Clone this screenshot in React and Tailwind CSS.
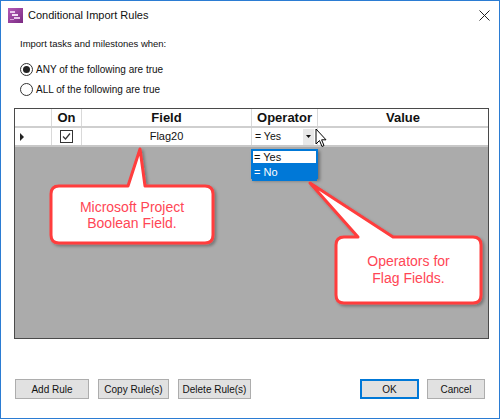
import React from "react";

const Radio = ({ checked, label }) => (
  <div className="flex items-center h-[20px] pl-[19px]">
    <span className="w-[13px] h-[13px] rounded-full border border-[#333] bg-white flex items-center justify-center">
      {checked && <span className="w-[7px] h-[7px] rounded-full bg-[#222]" />}
    </span>
    <span className="ml-[3px] text-[10px] text-[#111]">{label}</span>
  </div>
);

const Btn = ({ children, w, primary }) => (
  <button
    className={
      "h-[20px] text-[10px] text-[#111] bg-[#e1e1e1] flex items-center justify-center " +
      (primary ? "border-2 border-[#0078d7]" : "border border-[#adadad]")
    }
    style={{ width: w }}
  >
    {children}
  </button>
);

const AppIcon = () => (
  <svg width="15" height="15" viewBox="0 0 15 15">
    <defs>
      <linearGradient id="ig" x1="0" y1="0" x2="1" y2="1">
        <stop offset="0" stopColor="#b45ab8" />
        <stop offset="1" stopColor="#7a2a82" />
      </linearGradient>
    </defs>
    <rect x="0" y="0" width="15" height="15" fill="url(#ig)" />
    <rect x="2" y="3" width="5" height="2" fill="#e9c6ec" />
    <rect x="4" y="6" width="6" height="2" fill="#f4e0f5" />
    <rect x="6" y="9" width="6" height="2" fill="#e9c6ec" />
    <rect x="2" y="11" width="4" height="1" fill="#d7a3da" />
  </svg>
);

const Callouts = () => (
  <svg
    className="absolute left-0 top-0 pointer-events-none"
    width="500"
    height="419"
    viewBox="0 0 500 419"
  >
    <defs>
      <filter id="sh" x="-10%" y="-10%" width="130%" height="130%">
        <feDropShadow dx="2" dy="2" stdDeviation="1.5" floodColor="#000" floodOpacity="0.3" />
      </filter>
    </defs>
    <path
      d="M58 185 H127 L139 148 L144 185 H204 Q212 185 212 193 V234 Q212 242 204 242 H58 Q50 242 50 234 V193 Q50 185 58 185 Z"
      fill="#fff"
      stroke="#ff3c3c"
      strokeWidth="3"
      strokeLinejoin="round"
      filter="url(#sh)"
    />
    <path
      d="M343 236 H357 L309 182 L392 236 H472 Q480 236 480 244 V294 Q480 302 472 302 H343 Q335 302 335 294 V244 Q335 236 343 236 Z"
      fill="#fff"
      stroke="#ff3c3c"
      strokeWidth="3"
      strokeLinejoin="round"
      filter="url(#sh)"
    />
  </svg>
);

const Cursor = () => (
  <svg width="12" height="20" viewBox="0 0 12 20">
    <path d="M1 1 V16 L4.5 12.5 L7 18.5 L9 17.5 L6.6 11.8 H11 Z" fill="#fff" stroke="#000" strokeWidth="1" strokeLinejoin="round" />
  </svg>
);

export default function App() {
  return (
    <div
      className="relative w-[500px] h-[419px] bg-white border border-[#2b7cd3] overflow-hidden"
      style={{ fontFamily: '"Liberation Sans", Arial, sans-serif' }}
    >
      {/* title bar */}
      <div className="h-[29px] flex items-center pl-[7px] pr-[9px]">
        <AppIcon />
        <span className="ml-[5px] text-[11px] text-[#111]">Conditional Import Rules</span>
        <span className="ml-auto">
          <svg width="11" height="11" viewBox="0 0 11 11">
            <path d="M0.5 0.5 L10.5 10.5 M10.5 0.5 L0.5 10.5" stroke="#222" strokeWidth="1" />
          </svg>
        </span>
      </div>

      <div className="pl-[19px] mt-[7px] h-[14px] text-[9.5px] text-[#111] leading-[14px]">
        Import tasks and milestones when:
      </div>
      <div className="mt-[8px]">
        <Radio checked label="ANY of the following are true" />
        <Radio label="ALL of the following are true" />
      </div>

      {/* grid */}
      <div className="relative ml-[13px] mt-[9px] w-[475px] h-[231px] border border-[#4a4a4a] bg-[#ababab] flex flex-col">
        <div className="h-[19px] flex bg-white border-b-2 border-[#cfcfcf] text-[13px] font-bold text-[#111]">
          <div className="w-[37px] border-r border-[#d9d9d9]" />
          <div className="w-[30px] border-r border-[#d9d9d9] flex items-center justify-center">On</div>
          <div className="w-[170px] border-r border-[#d9d9d9] flex items-center justify-center">Field</div>
          <div className="w-[66px] border-r border-[#d9d9d9] flex items-center justify-center">Operator</div>
          <div className="flex-1 flex items-center justify-center">Value</div>
        </div>
        <div className="h-[19px] flex bg-white border-b-2 border-[#c8c8c8] text-[11px] text-[#111]">
          <div className="w-[37px] border-r border-[#d9d9d9] flex items-center pl-[5px]">
            <svg width="5" height="8" viewBox="0 0 5 8">
              <path d="M0 0 L4 4 L0 8 Z" fill="#222" />
            </svg>
          </div>
          <div className="w-[30px] border-r border-[#d9d9d9] flex items-center justify-center">
            <svg width="13" height="13" viewBox="0 0 13 13">
              <rect x="0.5" y="0.5" width="12" height="12" fill="#fff" stroke="#333" />
              <path d="M3 6.5 L5.5 9 L10 3.5" fill="none" stroke="#333" strokeWidth="1.2" />
            </svg>
          </div>
          <div className="w-[170px] border-r border-[#d9d9d9] flex items-center justify-center">Flag20</div>
          <div className="w-[66px] border-r border-[#d9d9d9] flex items-center pl-[3px] text-[10.5px]">
            <span>= Yes</span>
            <span className="ml-auto mr-[3px] w-[11px] h-[16px] bg-[#e8e8e8] flex items-center justify-center">
              <svg width="5" height="3" viewBox="0 0 5 3">
                <path d="M0 0 H5 L2.5 3 Z" fill="#111" />
              </svg>
            </span>
          </div>
          <div className="flex-1" />
        </div>

        {/* dropdown list */}
        <div className="absolute left-[236px] top-[40px] w-[67px] h-[30px] bg-white border border-[#0078d7] shadow-[2px_2px_3px_rgba(0,0,0,0.35)] text-[11px] flex flex-col">
          <div className="h-[14px] border border-[#0078d7] flex items-center pl-[1px] text-[#111]">= Yes</div>
          <div className="flex-1 bg-[#0078d7] text-white flex items-center pl-[2px]">= No</div>
        </div>

        <div className="absolute left-[300px] top-[19px]">
          <Cursor />
        </div>
      </div>

      {/* buttons */}
      <div className="mt-[40px] ml-[14px] mr-[14px] flex items-center">
        <Btn w={74}>Add Rule</Btn>
        <div className="ml-[9px]">
          <Btn w={71}>Copy Rule(s)</Btn>
        </div>
        <div className="ml-[9px]">
          <Btn w={73}>Delete Rule(s)</Btn>
        </div>
        <div className="ml-auto">
          <Btn w={59} primary>OK</Btn>
        </div>
        <div className="ml-[8px]">
          <Btn w={58}>Cancel</Btn>
        </div>
      </div>

      <Callouts />
      <div className="absolute left-[50px] top-[198px] w-[162px] text-center text-[14px] leading-[16px] text-[#ff4655]">
        Microsoft Project
        <br />
        Boolean Field.
      </div>
      <div className="absolute left-[335px] top-[252px] w-[145px] text-center text-[14px] leading-[17px] text-[#ff4655]">
        Operators for
        <br />
        Flag Fields.
      </div>
    </div>
  );
}
